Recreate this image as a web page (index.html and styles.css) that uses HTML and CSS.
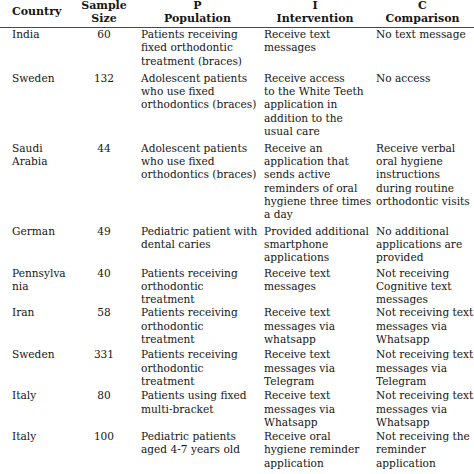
FILE: index.html
```html
<!DOCTYPE html>
<html>
<head>
<meta charset="utf-8">
<link rel="stylesheet" href="styles.css">
</head>
<body>
<table class="pico">
  <colgroup>
    <col class="c-country"><col class="c-size"><col class="c-p"><col class="c-i"><col class="c-c">
  </colgroup>
  <thead>
    <tr>
      <th class="h-country">Country</th>
      <th class="h-center">Sample<br>Size</th>
      <th class="h-center">P<br>Population</th>
      <th class="h-center">I<br>Intervention</th>
      <th class="h-center">C<br>Comparison</th>
    </tr>
  </thead>
  <tbody>
    <tr class="r1">
      <td class="country">India</td><td class="num">60</td>
      <td>Patients receiving<br>fixed orthodontic<br>treatment (braces)</td>
      <td>Receive text<br>messages</td>
      <td>No text message</td>
    </tr>
    <tr class="r2">
      <td class="country">Sweden</td><td class="num">132</td>
      <td>Adolescent patients<br>who use fixed<br>orthodontics (braces)</td>
      <td>Receive access<br>to the White Teeth<br>application in<br>addition to the<br>usual care</td>
      <td>No access</td>
    </tr>
    <tr class="r3">
      <td class="country">Saudi<br>Arabia</td><td class="num">44</td>
      <td>Adolescent patients<br>who use fixed<br>orthodontics (braces)</td>
      <td>Receive an<br>application that<br>sends active<br>reminders of oral<br>hygiene three times<br>a day</td>
      <td>Receive verbal<br>oral hygiene<br>instructions<br>during routine<br>orthodontic visits</td>
    </tr>
    <tr class="r4">
      <td class="country">German</td><td class="num">49</td>
      <td>Pediatric patient with<br>dental caries</td>
      <td>Provided additional<br>smartphone<br>applications</td>
      <td>No additional<br>applications are<br>provided</td>
    </tr>
    <tr class="r5">
      <td class="country">Pennsylva<br>nia</td><td class="num">40</td>
      <td>Patients receiving<br>orthodontic<br>treatment</td>
      <td>Receive text<br>messages</td>
      <td>Not receiving<br>Cognitive text<br>messages</td>
    </tr>
    <tr class="r6">
      <td class="country">Iran</td><td class="num">58</td>
      <td>Patients receiving<br>orthodontic<br>treatment</td>
      <td>Receive text<br>messages via<br>whatsapp</td>
      <td>Not receiving text<br>messages via<br>Whatsapp</td>
    </tr>
    <tr class="r7">
      <td class="country">Sweden</td><td class="num">331</td>
      <td>Patients receiving<br>orthodontic<br>treatment</td>
      <td>Receive text<br>messages via<br>Telegram</td>
      <td>Not receiving text<br>messages via<br>Telegram</td>
    </tr>
    <tr class="r8">
      <td class="country">Italy</td><td class="num">80</td>
      <td>Patients using fixed<br>multi-bracket</td>
      <td>Receive text<br>messages via<br>Whatsapp</td>
      <td>Not receiving text<br>messages via<br>Whatsapp</td>
    </tr>
    <tr class="r9">
      <td class="country">Italy</td><td class="num">100</td>
      <td>Pediatric patients<br>aged 4-7 years old</td>
      <td>Receive oral<br>hygiene reminder<br>application</td>
      <td>Not receiving the<br>reminder<br>application</td>
    </tr>
  </tbody>
</table>
</body>
</html>
```
FILE: styles.css
```css
html, body {
  margin: 0;
  padding: 0;
  background: #ffffff;
}
body {
  font-family: "DejaVu Serif", "Liberation Serif", serif;
  font-size: 10.6px;
  color: #161616;
}
.pico {
  border-collapse: collapse;
  table-layout: fixed;
  width: 474px;
}
.c-country { width: 72px; }
.c-size { width: 64px; }
.c-p { width: 123px; }
.c-i { width: 112px; }
.c-c { width: 103px; }

.pico th {
  font-size: 11px;
  font-weight: bold;
  line-height: 12.8px;
  padding: 0 0 1.4px 0;
  border-bottom: 1px solid #4a4a4a;
  vertical-align: bottom;
  white-space: nowrap;
}
.pico th.h-country {
  text-align: left;
  padding-left: 12px;
  vertical-align: middle;
}
.pico th.h-center {
  text-align: center;
}
.pico td {
  line-height: 13.3px;
  padding: 0 0 0 5px;
  vertical-align: top;
  white-space: nowrap;
}
.pico td.country {
  padding-left: 12px;
}
.pico td.num {
  padding-left: 0;
  text-align: center;
}
.r1 td { padding-bottom: 4px; }
.r2 td { padding-bottom: 3.5px; }
.r3 td { padding-bottom: 3px; }
.r4 td { padding-bottom: 2px; }
.r5 td { padding-bottom: 0; }
.r6 td { padding-bottom: 2px; }
.r7 td { padding-bottom: 1px; }
.r8 td { padding-bottom: 1px; }
```
